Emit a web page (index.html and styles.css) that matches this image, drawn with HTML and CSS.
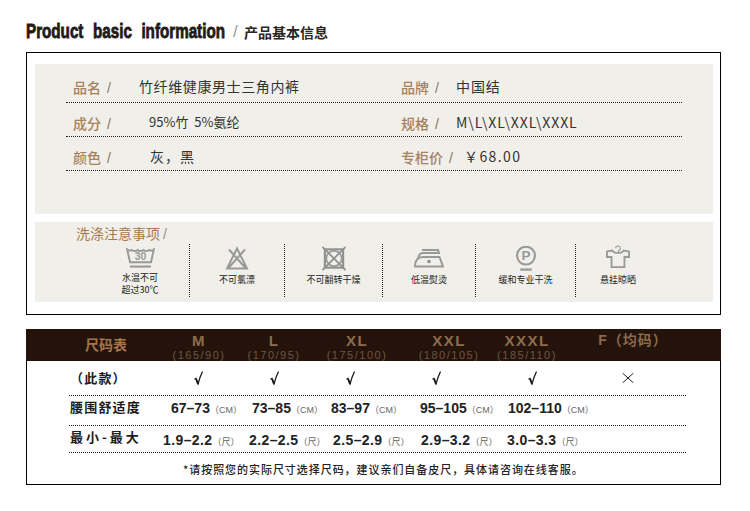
FILE: index.html
```html
<!DOCTYPE html>
<html lang="zh">
<head>
<meta charset="utf-8">
<title>Product basic information</title>
<link rel="stylesheet" href="styles.css">
</head>
<body>
<svg class="defs" width="0" height="0" aria-hidden="true">
  <symbol id="tick" viewBox="0 0 9 14"><path d="M.5 8.300 2 7.500l2 5.500C5 9 6.800 4 8.500.5" fill="none" stroke="#1c1c1c" stroke-width="1.300"/><path d="M2 7.800 4 13" fill="none" stroke="#1c1c1c" stroke-width="1.800"/></symbol>
</svg>
<h1 class="title"><span class="title-box"><span class="title-en">Product basic information</span></span><span class="title-sep">/</span><span class="title-cn">产品基本信息</span></h1>

<section class="info-box">
  <div class="spec-panel">
    <div class="spec-row">
      <div class="label l1">品名<i>/</i></div><div class="value v-a">竹纤维健康男士三角内裤</div>
      <div class="label l2">品牌<i>/</i></div><div class="value v-d">中国结</div>
    </div>
    <div class="spec-row">
      <div class="label l1">成分<i>/</i></div><div class="value v-b">95%竹&nbsp; 5%氨纶</div>
      <div class="label l2">规格<i>/</i></div><div class="value v-d">M\L\XL\XXL\XXXL</div>
    </div>
    <div class="spec-row">
      <div class="label l1">颜色<i>/</i></div><div class="value v-c">灰，黑</div>
      <div class="label l2">专柜价<i>/</i></div><div class="value v-e">￥68.00</div>
    </div>
  </div>
  <div class="care-panel">
    <div class="care-title">洗涤注意事项<i>/</i></div>
    <div class="care-grid">
      <div class="care-cell first">
        <svg class="ic ic-wash" viewBox="0 0 30 21"><path d="M1 1.500c2 1.600 3.500 1.600 5 .5 2 1.500 4 1.500 6 0 2 1.500 4 1.500 6 0 2 1.500 4 1.500 6 0 1.500 1.100 3 1.100 5-.5L26 15H4Z" fill="none" stroke="#999" stroke-width="2"/><path d="M4 19.500h22" stroke="#999" stroke-width="2.200"/><text x="15" y="12.500" text-anchor="middle" class="ic-num">30</text></svg>
        <p class="care-cap two">水温不可<br>超过30℃</p>
      </div>
      <div class="care-cell">
        <svg class="ic" viewBox="0 0 24 24"><path d="M12 2 2 22h20ZM4 3l17 19M20 3 3 22" fill="none" stroke="#999" stroke-width="2"/></svg>
        <p class="care-cap">不可氯漂</p>
      </div>
      <div class="care-cell">
        <svg class="ic" viewBox="0 0 24 26"><rect x="2.500" y="3.500" width="19" height="19" fill="none" stroke="#8f8f8f" stroke-width="2.200"/><circle cx="12" cy="13" r="8" fill="none" stroke="#999" stroke-width="1.800"/><path d="M0 1l24 24M24 1 0 25" stroke="#8f8f8f" stroke-width="1.800"/></svg>
        <p class="care-cap">不可翻转干燥</p>
      </div>
      <div class="care-cell">
        <svg class="ic ic-iron" viewBox="0 0 30 20"><path d="M8 2h16l1 3H8.500C6 5 5 7 4 10M1 18.500c0-6 3-9.500 8-9.500h16.500l3.500 9.500Z" fill="none" stroke="#999" stroke-width="2"/><circle cx="15" cy="13.500" r="1.700" fill="#888"/></svg>
        <p class="care-cap">低温熨烫</p>
      </div>
      <div class="care-cell">
        <svg class="ic ic-p" viewBox="0 0 24 26"><circle cx="12" cy="10" r="9.300" fill="none" stroke="#999" stroke-width="2.200"/><text x="12" y="15" text-anchor="middle" class="ic-p-t">P</text><path d="M6 24.500h12" stroke="#999" stroke-width="2.400"/></svg>
        <p class="care-cap">缓和专业干洗</p>
      </div>
      <div class="care-cell">
        <svg class="ic ic-shirt" viewBox="0 0 26 25"><path d="M7 6 1 7v6h5v11h14V13h5V7l-6-1c-1 3.500-11 3.500-12 0Z" fill="none" stroke="#999" stroke-width="2"/><path d="M10.500 3.500a2.500 2.500 0 1 1 3 2.500v2" fill="none" stroke="#999" stroke-width="1.100"/></svg>
        <p class="care-cap">悬挂晾晒</p>
      </div>
    </div>
  </div>
</section>

<section class="size-box">
  <div class="size-head">
    <div class="sh-name">尺码表</div>
    <div class="sh-col"><b>M</b><small>(165/90)</small></div>
    <div class="sh-col"><b>L</b><small>(170/95)</small></div>
    <div class="sh-col"><b>XL</b><small>(175/100)</small></div>
    <div class="sh-col"><b>XXL</b><small>(180/105)</small></div>
    <div class="sh-col"><b>XXXL</b><small>(185/110)</small></div>
    <div class="sh-col sh-f"><b>F（均码）</b></div>
  </div>
  <div class="size-body">
    <div class="size-row r-mark">
      <div class="row-label">（此款）</div>
      <svg class="mk"><use href="#tick"/></svg>
      <svg class="mk"><use href="#tick"/></svg>
      <svg class="mk"><use href="#tick"/></svg>
      <svg class="mk"><use href="#tick"/></svg>
      <svg class="mk"><use href="#tick"/></svg>
      <svg class="mk-x" viewBox="0 0 12 10"><path d="M.5 0 11.500 10M11.500 0 .5 10" fill="none" stroke="#222" stroke-width="1"/></svg>
    </div>
    <div class="size-row r-waist">
      <div class="row-label">腰围舒适度</div>
      <div class="num">67–73<em>（CM）</em></div>
      <div class="num">73–85<em>（CM）</em></div>
      <div class="num">83–97<em>（CM）</em></div>
      <div class="num">95–105<em>（CM）</em></div>
      <div class="num">102–110<em>（CM）</em></div>
    </div>
    <div class="size-row r-min">
      <div class="row-label">最小-最大</div>
      <div class="num">1.9–2.2<em>（尺）</em></div>
      <div class="num">2.2–2.5<em>（尺）</em></div>
      <div class="num">2.5–2.9<em>（尺）</em></div>
      <div class="num">2.9–3.2<em>（尺）</em></div>
      <div class="num">3.0–3.3<em>（尺）</em></div>
    </div>
    <p class="size-note">*请按照您的实际尺寸选择尺码，建议亲们自备皮尺，具体请咨询在线客服。</p>
  </div>
</section>
</body>
</html>
```
FILE: styles.css
```css
* { box-sizing: border-box; }
html, body { margin: 0; padding: 0; background: #fff; }
body {
  width: 750px;
  height: 511px;
  overflow: hidden;
  padding-left: 26px;
  font-family: "Liberation Sans", "Noto Sans CJK SC", sans-serif;
  color: #2d2a28;
}
.defs { position: absolute; }
.title {
  margin: 0;
  height: 52px;
  padding-top: 12px;
  display: flex;
  align-items: center;
  font-size: 14px;
  line-height: 24px;
}
.title-box { flex: none; width: 207px; }
.title-en {
  display: inline-block;
  font-size: 20px;
  font-weight: 700;
  word-spacing: 7px;
  color: #221a16;
  -webkit-text-stroke: .8px #221a16;
  white-space: nowrap;
  transform: scaleX(.76);
  transform-origin: left center;
}
.title-sep { color: #999; font-weight: 400; font-size: 17px; width: 11px; }
.title-cn { font-family: "Noto Sans CJK SC", sans-serif; font-weight: 700; color: #2b2523; }

.info-box {
  width: 695px;
  height: 263px;
  border: 1px solid #000;
  padding: 11px 7px 0 8px;
}
.spec-panel {
  height: 150px;
  background: #f1efea;
  padding: 5px 31px 0 31px;
}
.spec-row {
  height: 34px;
  border-bottom: 1px dotted #222;
  display: flex;
  align-items: center;
  font-family: "Noto Sans CJK SC", sans-serif;
}
.spec-row + .spec-row { padding-top: 4px; }
.label {
  flex: none;
  font-size: 14px;
  font-weight: 500;
  color: #a5825f;
  white-space: nowrap;
  padding-top: 2px;
}
.label i {
  font-style: normal;
  font-weight: 400;
  font-family: "Liberation Sans", sans-serif;
  color: #8a7565;
  margin-left: 6px;
}
.l1 { margin-left: 7px; width: 66px; }
.l2 { width: 55px; }
.value { font-size: 14px; color: #333; white-space: nowrap; letter-spacing: .6px; }
.v-a { width: 262px; }
.v-b { width: 252px; margin-left: 10px; letter-spacing: 0; font-size: 13px; }
.v-c { width: 251px; margin-left: 11px; letter-spacing: 1px; }
.v-d { letter-spacing: .9px; font-size: 14px; }
.v-e { letter-spacing: 1.400px; font-size: 14px; margin-left: 8px; }

.care-panel {
  height: 80px;
  margin-top: 8px;
  background: #f1efea;
}
.care-title {
  height: 22px;
  padding: 1px 0 0 41px;
  font-family: "Noto Sans CJK SC", sans-serif;
  font-size: 14px;
  line-height: 20px;
  color: #a8784e;
}
.care-title i { font-style: normal; font-family: "Liberation Sans", sans-serif; color: #9a8a7a; margin-left: 3px; }
.care-grid {
  display: grid;
  grid-template-columns: 155px 95px 98px 93px 100px 84px;
  height: 53px;
}
.care-cell {
  display: flex;
  flex-direction: column;
  align-items: center;
  padding-top: 2px;
  border-right: 1px dotted #222;
}
.care-cell:last-child { border-right: 0; }
.care-cell.first { padding: 4px 0 0 56px; }
.ic { display: block; width: 24px; height: 25px; }
.ic-wash { width: 29px; height: 20px; }
.ic-iron { width: 30px; height: 20px; margin-top: 2px; margin-bottom: 3px; }
.ic-shirt { margin-top: -2px; margin-bottom: 2px; }
.ic-num { font: 700 11px "Liberation Sans", sans-serif; fill: #999; }
.ic-p-t { font: 700 14px "Liberation Sans", sans-serif; fill: #999; }
.care-cap {
  margin: 3px 0 0;
  font-family: "Noto Sans CJK SC", sans-serif;
  font-size: 9px;
  line-height: 12px;
  text-align: center;
  color: #222;
  white-space: nowrap;
}
.care-cap.two { margin-top: 4px; }

.size-box {
  width: 695px;
  height: 156px;
  margin-top: 14px;
  border: 1px solid #000;
  border-top: 0;
}
.size-head {
  height: 32px;
  margin-left: -1px;
  width: 695px;
  background: #24130b;
  display: grid;
  grid-template-columns: 136px 74px 76px 90px 94px 62px 150px 1fr;
}
.sh-name {
  padding: 3px 0 0 59px;
  font: 700 14px/24px "Noto Sans CJK SC", sans-serif;
  color: #a5744a;
}
.sh-col { display: flex; flex-direction: column; align-items: center; }
.sh-col b {
  font: 700 15px/17px "Liberation Sans", "Noto Sans CJK SC", sans-serif;
  letter-spacing: 1.500px;
  color: #8f6d4c;
  padding-top: 3px;
  height: 20px;
}
.sh-col small {
  font: 400 11px/12px "Liberation Sans", sans-serif;
  letter-spacing: 1.500px;
  color: #6f5640;
  white-space: nowrap;
}
.sh-f b { font-size: 14px; color: #8a6a4c; letter-spacing: 1px; white-space: nowrap; }
.size-body { padding: 0 34px 0 42px; }
.size-row {
  display: grid;
  align-items: center;
  border-bottom: 1px dotted #222;
  white-space: nowrap;
}
.r-mark { height: 35px; grid-template-columns: 125px 76px 76px 86px 96px 94px 1fr; justify-items: start; }
.r-waist { height: 30px; grid-template-columns: 102px 81px 79px 89px 88px 1fr; }
.r-min { height: 27px; grid-template-columns: 94px 86px 84px 88px 86px 1fr; }
.row-label {
  font: 700 13px/20px "Noto Sans CJK SC", sans-serif;
  letter-spacing: 1.200px;
  color: #1d1a18;
  padding-left: 1px;
}
.r-waist .row-label { padding-bottom: 8px; }
.r-min .row-label { padding-bottom: 5px; letter-spacing: 3px; }
.mk { display: block; width: 9px; height: 14px; }
.mk-x { display: block; width: 12px; height: 10px; }
.num { font: 700 14px/20px "Liberation Sans", sans-serif; color: #222; }
.r-waist .num { padding-bottom: 4px; }
.r-min .num { letter-spacing: .4px; padding-top: 4px; }
.num em { font: 400 9px/20px "Liberation Sans", "Noto Sans CJK SC", sans-serif; color: #666; letter-spacing: 0; }
.size-note {
  margin: 0;
  padding: 8px 0 0 114px;
  font: 500 11px/16px "Noto Sans CJK SC", sans-serif;
  letter-spacing: .95px;
  color: #222;
  white-space: nowrap;
}
```
